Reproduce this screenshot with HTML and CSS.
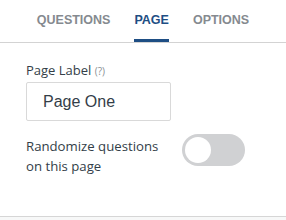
FILE: index.html
```html
<!DOCTYPE html>
<html>
<head>
<meta charset="utf-8">
<link rel="stylesheet" href="styles.css">
</head>
<body>
<div class="panel">
  <nav class="tabs">
    <div class="tab">QUESTIONS</div>
    <div class="tab active">PAGE</div>
    <div class="tab">OPTIONS</div>
  </nav>
  <div class="content">
    <div class="field-label">Page Label <span class="help">(?)</span></div>
    <div class="input">Page One</div>
    <div class="toggle-row">
      <div class="toggle-label">Randomize questions<br>on this page</div>
      <div class="toggle"><div class="knob"></div></div>
    </div>
  </div>
  <div class="footer"></div>
</div>
</body>
</html>
```
FILE: styles.css
```css
html, body {
  margin: 0;
  padding: 0;
  background: #fff;
}
.panel {
  width: 286px;
  height: 220px;
  display: flex;
  flex-direction: column;
  overflow: hidden;
}
.tabs {
  display: flex;
  justify-content: center;
  gap: 24px;
  height: 42px;
  border-bottom: 1px solid #d3d3d3;
  box-sizing: content-box;
}
.tab {
  font-family: "Liberation Sans", Arial, sans-serif;
  font-weight: bold;
  font-size: 12.5px;
  color: #858a8f;
  padding-top: 13px;
  box-sizing: border-box;
  height: 42px;
  border-bottom: 3px solid transparent;
}
.tab.active {
  color: #1e4e84;
  border-bottom-color: #1e4e84;
}
.content {
  flex: 1;
  padding: 18px 0 0 26px;
}
.field-label {
  font-family: "Open Sans", sans-serif;
  font-size: 13px;
  color: #333e48;
  line-height: 18px;
}
.help {
  font-size: 10px;
  color: #8a8f94;
}
.input {
  margin-top: 2px;
  width: 145px;
  height: 39px;
  box-sizing: border-box;
  border: 1px solid #d9d9d9;
  border-radius: 2px;
  font-family: "Liberation Sans", Arial, sans-serif;
  font-size: 16px;
  color: #333e48;
  padding: 10px 0 0 16px;
}
.toggle-row {
  display: flex;
  align-items: flex-start;
  margin-top: 15px;
}
.toggle-label {
  font-family: "Open Sans", sans-serif;
  font-size: 13.2px;
  line-height: 20px;
  color: #333e48;
  width: 156px;
}
.toggle {
  width: 63px;
  height: 32px;
  border-radius: 16px;
  background: #d0d1d3;
  box-sizing: border-box;
  padding: 3px;
  margin-top: -2px;
}
.knob {
  width: 26px;
  height: 26px;
  border-radius: 50%;
  background: #fff;
}
.footer {
  height: 3px;
  border-top: 1px solid #d6d6d6;
  background: #f7f8f8;
}
```
